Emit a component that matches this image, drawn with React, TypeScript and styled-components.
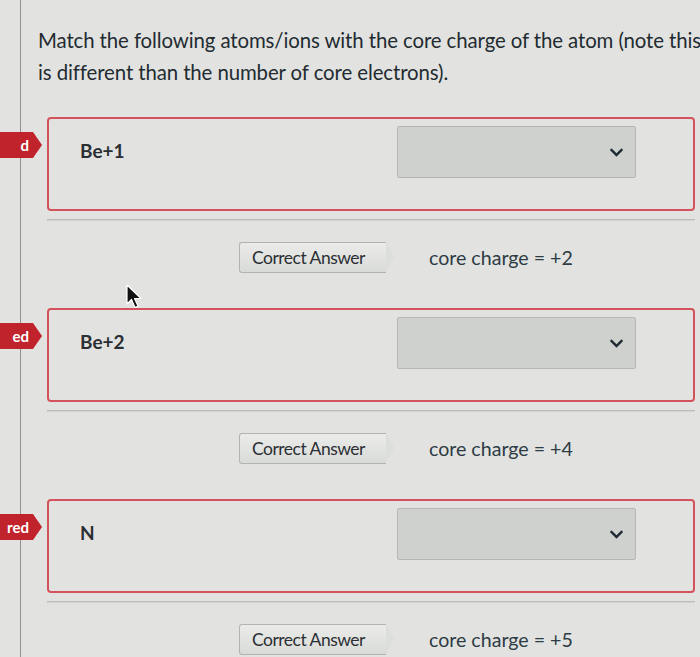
import styled, { createGlobalStyle } from 'styled-components'
import { FaChevronDown } from 'react-icons/fa'

const GlobalStyle = createGlobalStyle`
	html, body {
		margin: 0;
		padding: 0;
		background: #e2e3e0;
		overflow: hidden;
	}
	body {
		font-family: Lato, "Open Sans", sans-serif;
		color: #2d3b45;
	}
`

const Page = styled.div`
	position: relative;
	width: 700px;
	height: 657px;
	overflow: hidden;
	background: #e2e3e0;
`

const Main = styled.div`
	margin-left: 20px;
	border-left: 1px solid #8f918e;
	min-height: 657px;
	padding: 24px 5px 0 17px;
`

const Question = styled.p`
	margin: 0 0 29px 0;
	font-size: 20.4px;
	line-height: 32px;
	white-space: nowrap;
	color: #222b31;
	letter-spacing: -0.1px;
`

const Answer = styled.div`
	position: relative;
	margin-left: 9px;
`

const Badge = styled.div`
	position: absolute;
	top: 15px;
	right: calc(100% + 14px);
	width: 40px;
	height: 26px;
	display: flex;
	align-items: center;
	justify-content: flex-end;
	padding-right: 4px;
	box-sizing: border-box;
	background: #c0232c;
	color: #fff;
	font-size: 15px;
	font-weight: 700;
	&::after {
		content: '';
		position: absolute;
		left: 100%;
		top: 0;
		border-top: 13px solid transparent;
		border-bottom: 13px solid transparent;
		border-left: 9px solid #c0232c;
	}
`

const Box = styled.div`
	display: flex;
	height: 94px;
	box-sizing: border-box;
	padding: 7px 0 0 0;
	border: 2px solid #d4525b;
	border-radius: 4px;
`

const Term = styled.div`
	width: 348px;
	padding: 13px 0 0 31px;
	box-sizing: border-box;
	font-size: 19px;
	font-weight: 700;
	color: #2b2f33;
`

const Select = styled.div`
	width: 239px;
	height: 52px;
	box-sizing: border-box;
	display: flex;
	align-items: center;
	justify-content: flex-end;
	padding-right: 11px;
	background: #cfd1ce;
	border: 1px solid #b6b8b5;
	border-radius: 2px;
	color: #1f2a33;
	font-size: 15px;
`

const Separator = styled.div`
	margin-top: 8px;
	height: 1px;
	background: #bcbebb;
	border-bottom: 1px solid #d2d4d1;
`

const Feedback = styled.div`
	display: flex;
	align-items: center;
	gap: 43px;
	padding: 21px 0 35px 192px;
`

const Tag = styled.div`
	position: relative;
	height: 31px;
	box-sizing: border-box;
	display: flex;
	align-items: center;
	padding: 0 21px 0 12px;
	background: linear-gradient(#ebecea, #d9dbd8);
	border: 1px solid #b2b4b1;
	border-right: none;
	border-radius: 3px 0 0 3px;
	font-size: 17.5px;
	color: #2b2f33;
	letter-spacing: -0.5px;
	&::after {
		content: '';
		position: absolute;
		left: 100%;
		top: -1px;
		border-top: 15px solid transparent;
		border-bottom: 15px solid transparent;
		border-left: 8px solid #dcdedb;
	}
`

const Result = styled.span`
	font-size: 19.6px;
	color: #2d3b45;
`

const Cursor = styled.svg`
	position: absolute;
	left: 126px;
	top: 284px;
`

const answers = [
	{ term: 'Be+1', status: 'd', correct: 'core charge = +2' },
	{ term: 'Be+2', status: 'ed', correct: 'core charge = +4' },
	{ term: 'N', status: 'red', correct: 'core charge = +5' },
]

const App = () => {
	return (
		<Page>
			<GlobalStyle />
			<Main>
				<Question>
					Match the following atoms/ions with the core charge of the atom (note this
					<br />
					is different than the number of core electrons).
				</Question>
				{answers.map((a) => (
					<Answer key={a.term}>
						<Badge>{a.status}</Badge>
						<Box>
							<Term>{a.term}</Term>
							<Select>
								<FaChevronDown />
							</Select>
						</Box>
						<Separator />
						<Feedback>
							<Tag>Correct Answer</Tag>
							<Result>{a.correct}</Result>
						</Feedback>
					</Answer>
				))}
			</Main>
			<Cursor width="18" height="26" viewBox="0 0 18 26">
				<path d="M1 1 L1 20 L5.5 15.5 L9 23.5 L12 22 L8.5 14.5 L15 14.5 Z" fill="#111" stroke="#fff" strokeWidth="1.2" strokeLinejoin="round" />
			</Cursor>
		</Page>
	)
}

export default App
